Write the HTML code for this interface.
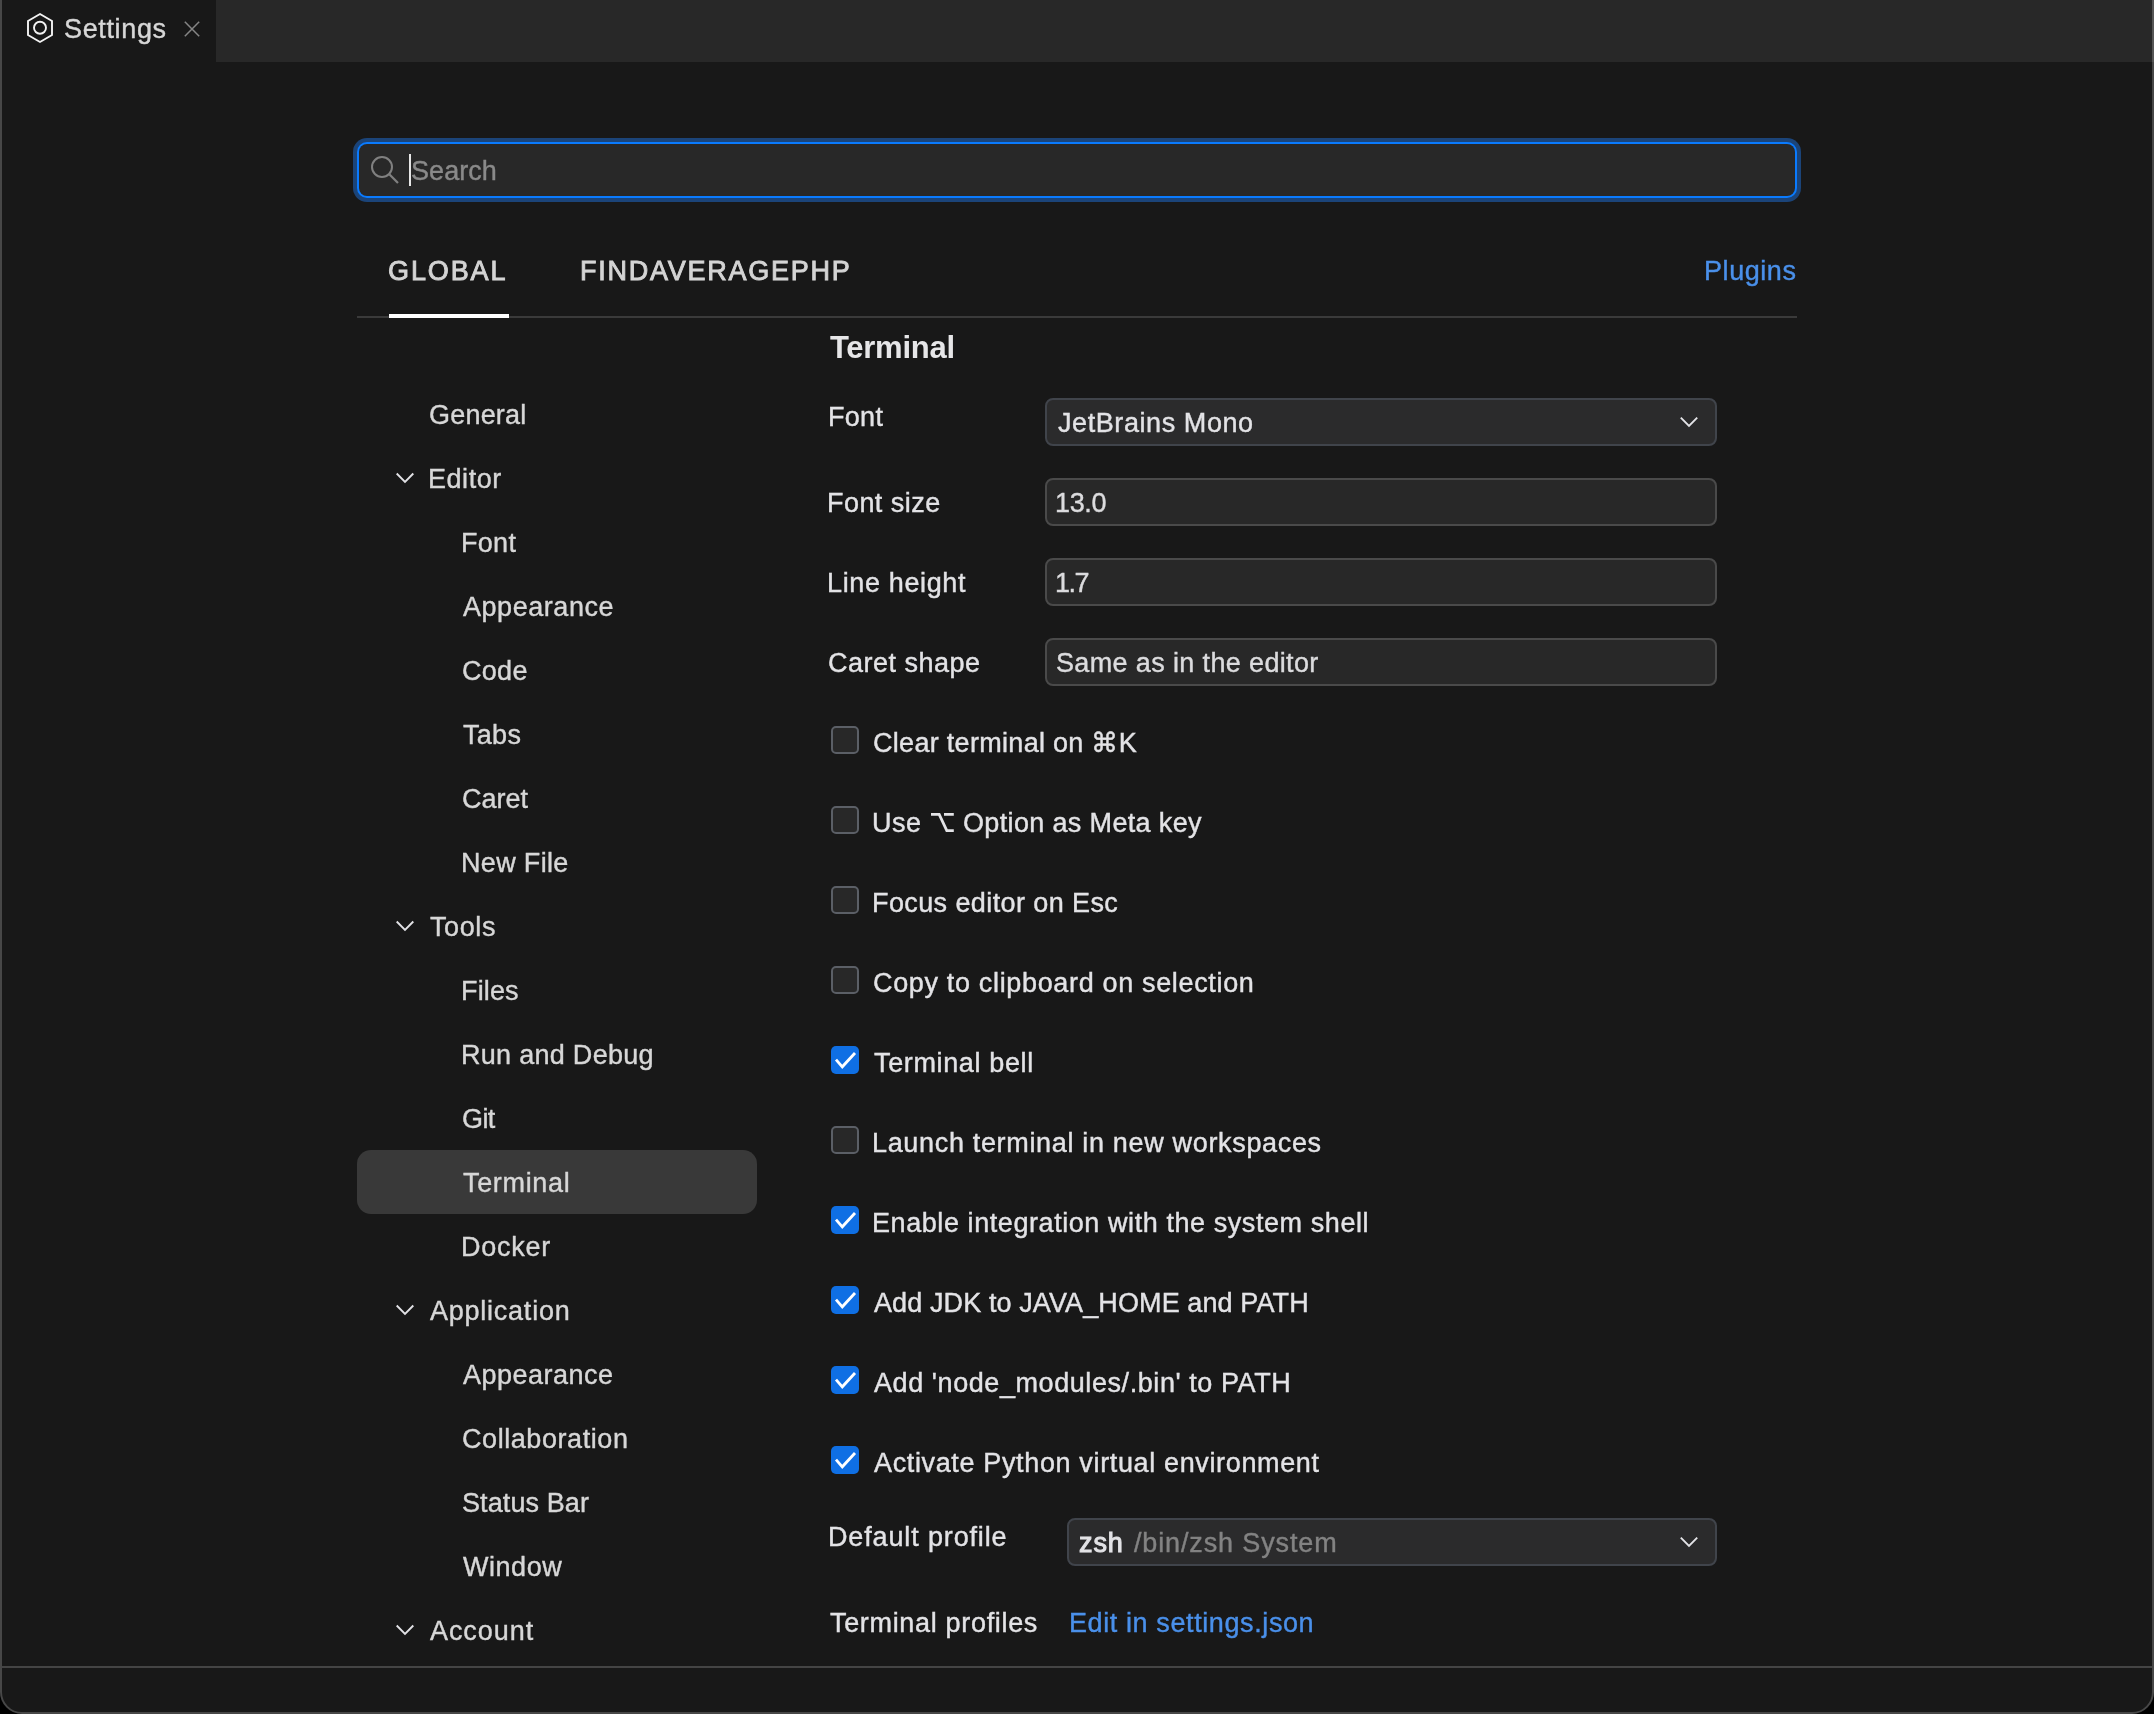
<!DOCTYPE html>
<html><head><meta charset="utf-8">
<style>
*{margin:0;padding:0;box-sizing:border-box}
html,body{width:2154px;height:1714px;overflow:hidden;background:#000}
body{font-family:"Liberation Sans",sans-serif;position:relative}
.win{position:absolute;left:0;top:-30px;width:2154px;height:1744px;background:#181818;border:2px solid #474747;border-radius:22px;overflow:hidden}
.t{position:absolute;line-height:1;white-space:nowrap;-webkit-font-smoothing:antialiased;will-change:transform;-webkit-text-stroke:0.4px currentColor}
.side{color:#d7d7d7}
.lab{color:#e3e3e6}
.val{color:#dcdcde}
.abs{position:absolute}
.box{position:absolute;border-radius:8px}
.field{background:#282828;border:2px solid #4a4a4a}
.dd{background:#2b2b2c;border:2px solid #40444b}
.cb{position:absolute;width:28px;height:28px;border-radius:5px;background:#282828;border:2px solid #5b5f66}
.cb.on{background:#0f6fe4;border:none}
</style></head><body>
<div class="win"></div>
<div class="abs" style="left:216px;top:0;width:1936px;height:62px;background:#282828"></div>
<div class="abs" style="left:2152px;top:0;width:2px;height:62px;background:#555555"></div>
<svg class="abs" style="left:24px;top:10px" width="32" height="36" viewBox="0 0 32 36">
<polygon points="16,4 28,11 28,25 16,32 4,25 4,11" fill="none" stroke="#f2f2f2" stroke-width="1.9"/>
<circle cx="16" cy="17.75" r="6" fill="none" stroke="#f2f2f2" stroke-width="1.9"/>
</svg>
<div id="t1" class="t side" style="left:64.00px;top:16.14px;font-size:27px;letter-spacing:0.643px;">Settings</div>
<svg class="abs" style="left:182px;top:19px" width="20" height="20" viewBox="0 0 20 20">
<path d="M2.8 2.8L17.2 17.2M17.2 2.8L2.8 17.2" stroke="#858585" stroke-width="1.5" fill="none"/>
</svg>
<div class="abs" style="left:353px;top:138px;width:1448px;height:64px;border-radius:14px;background:#1b4479"></div>
<div class="abs" style="left:357px;top:142px;width:1440px;height:56px;border-radius:10px;background:#0a7bff"></div>
<div class="abs" style="left:359px;top:144px;width:1436px;height:52px;border-radius:8px;background:#282828"></div>
<svg class="abs" style="left:360px;top:145px" width="50" height="50" viewBox="0 0 50 50">
<circle cx="22" cy="22" r="10" fill="none" stroke="#808080" stroke-width="2"/>
<path d="M29.3 29.3L38 38" stroke="#808080" stroke-width="2.2" fill="none"/>
</svg>
<div class="abs" style="left:409px;top:154px;width:2px;height:32px;background:#e6e6e6"></div>
<div id="t2" class="t " style="left:411.00px;top:158.14px;font-size:27px;letter-spacing:0.060px;color:#8a8a8a">Search</div>
<div id="t3" class="t " style="left:388.20px;top:258.14px;font-size:27px;letter-spacing:1.880px;color:#d4d4d4;-webkit-text-stroke:0.9px #d4d4d4">GLOBAL</div>
<div id="t4" class="t " style="left:579.80px;top:258.14px;font-size:27px;letter-spacing:1.746px;color:#d4d4d4;-webkit-text-stroke:0.9px #d4d4d4">FINDAVERAGEPHP</div>
<div id="t5" class="t " style="left:1704.20px;top:258.14px;font-size:27px;letter-spacing:0.567px;color:#4a90ea">Plugins</div>
<div class="abs" style="left:357px;top:316px;width:1440px;height:2px;background:#3a3a3a"></div>
<div class="abs" style="left:389px;top:314px;width:120px;height:4px;background:#ffffff"></div>
<div class="abs" style="left:357px;top:1150px;width:400px;height:64px;border-radius:14px;background:#393939"></div>
<div id="t6" class="t side" style="left:429.40px;top:402.34px;font-size:27px;letter-spacing:0.200px;">General</div>
<div id="t7" class="t side" style="left:428.40px;top:466.34px;font-size:27px;letter-spacing:0.540px;">Editor</div>
<svg class="abs" style="left:394px;top:469px" width="22" height="20" viewBox="0 0 22 20"><path d="M2.7 4.5L11 12.8L19.3 4.5" stroke="#e2e2e6" stroke-width="1.9" fill="none"/></svg>
<div id="t8" class="t side" style="left:460.60px;top:530.34px;font-size:27px;letter-spacing:0.300px;">Font</div>
<div id="t9" class="t side" style="left:462.60px;top:594.34px;font-size:27px;letter-spacing:0.545px;">Appearance</div>
<div id="t10" class="t side" style="left:461.60px;top:658.34px;font-size:27px;letter-spacing:0.300px;">Code</div>
<div id="t11" class="t side" style="left:462.60px;top:722.34px;font-size:27px;letter-spacing:0.300px;">Tabs</div>
<div id="t12" class="t side" style="left:461.60px;top:786.34px;font-size:27px;letter-spacing:0.000px;">Caret</div>
<div id="t13" class="t side" style="left:460.60px;top:850.34px;font-size:27px;letter-spacing:0.329px;">New File</div>
<div id="t14" class="t side" style="left:430.40px;top:914.34px;font-size:27px;letter-spacing:0.600px;">Tools</div>
<svg class="abs" style="left:394px;top:917px" width="22" height="20" viewBox="0 0 22 20"><path d="M2.7 4.5L11 12.8L19.3 4.5" stroke="#e2e2e6" stroke-width="1.9" fill="none"/></svg>
<div id="t15" class="t side" style="left:460.60px;top:978.34px;font-size:27px;letter-spacing:0.150px;">Files</div>
<div id="t16" class="t side" style="left:460.60px;top:1042.34px;font-size:27px;letter-spacing:0.284px;">Run and Debug</div>
<div id="t17" class="t side" style="left:461.60px;top:1106.34px;font-size:27px;letter-spacing:-0.600px;">Git</div>
<div id="t18" class="t side" style="left:462.60px;top:1170.34px;font-size:27px;letter-spacing:0.671px;">Terminal</div>
<div id="t19" class="t side" style="left:460.60px;top:1234.34px;font-size:27px;letter-spacing:0.740px;">Docker</div>
<div id="t20" class="t side" style="left:430.40px;top:1298.34px;font-size:27px;letter-spacing:0.760px;">Application</div>
<svg class="abs" style="left:394px;top:1301px" width="22" height="20" viewBox="0 0 22 20"><path d="M2.7 4.5L11 12.8L19.3 4.5" stroke="#e2e2e6" stroke-width="1.9" fill="none"/></svg>
<div id="t21" class="t side" style="left:462.60px;top:1362.34px;font-size:27px;letter-spacing:0.500px;">Appearance</div>
<div id="t22" class="t side" style="left:461.60px;top:1426.34px;font-size:27px;letter-spacing:0.567px;">Collaboration</div>
<div id="t23" class="t side" style="left:461.60px;top:1490.34px;font-size:27px;letter-spacing:0.100px;">Status Bar</div>
<div id="t24" class="t side" style="left:462.60px;top:1554.34px;font-size:27px;letter-spacing:0.540px;">Window</div>
<div id="t25" class="t side" style="left:430.40px;top:1618.34px;font-size:27px;letter-spacing:0.933px;">Account</div>
<svg class="abs" style="left:394px;top:1621px" width="22" height="20" viewBox="0 0 22 20"><path d="M2.7 4.5L11 12.8L19.3 4.5" stroke="#e2e2e6" stroke-width="1.9" fill="none"/></svg>
<div id="t26" class="t " style="left:830.40px;top:331.76px;font-size:31px;letter-spacing:-0.272px;font-weight:bold;color:#e6e6e8;-webkit-text-stroke:0">Terminal</div>
<div id="t27" class="t lab" style="left:828.40px;top:404.14px;font-size:27px;letter-spacing:0.300px;">Font</div>
<div class="box dd" style="left:1045px;top:398px;width:672px;height:48px"></div>
<div id="t28" class="t lab" style="left:1057.60px;top:410.14px;font-size:27px;letter-spacing:0.577px;">JetBrains Mono</div>
<svg class="abs" style="left:1676px;top:410px" width="26" height="24" viewBox="0 0 26 24"><path d="M4.8 7.7L13 15.9L21.2 7.7" stroke="#e4e4e8" stroke-width="1.9" fill="none"/></svg>
<div id="t29" class="t lab" style="left:827.40px;top:490.14px;font-size:27px;letter-spacing:0.450px;">Font size</div>
<div class="box field" style="left:1045px;top:478px;width:672px;height:48px"></div>
<div id="t30" class="t val" style="left:1055.00px;top:490.14px;font-size:27px;letter-spacing:-0.367px;">13.0</div>
<div id="t31" class="t lab" style="left:827.40px;top:570.14px;font-size:27px;letter-spacing:0.640px;">Line height</div>
<div class="box field" style="left:1045px;top:558px;width:672px;height:48px"></div>
<div id="t32" class="t val" style="left:1055.00px;top:570.14px;font-size:27px;letter-spacing:-1.500px;">1.7</div>
<div id="t33" class="t lab" style="left:828.40px;top:650.14px;font-size:27px;letter-spacing:0.500px;">Caret shape</div>
<div class="box field" style="left:1045px;top:638px;width:672px;height:48px"></div>
<div id="t34" class="t val" style="left:1056.00px;top:650.14px;font-size:27px;letter-spacing:0.360px;">Same as in the editor</div>
<div class="cb" style="left:831px;top:726px"></div>
<div id="t35" class="t lab" style="left:872.60px;top:730.14px;font-size:27px;letter-spacing:0.300px;">Clear terminal on ⌘K</div>
<div class="cb" style="left:831px;top:806px"></div>
<div id="t36" class="t lab" style="left:872.00px;top:810.14px;font-size:27px;letter-spacing:0.500px;">Use</div>
<svg class="abs" style="left:931px;top:813px" width="24" height="20" viewBox="0 0 24 20"><path d="M0 1.4H8.2L15.8 17.6H22.8M13 1.4H22.8" stroke="#e3e3e6" stroke-width="2.8" fill="none"/></svg>
<div id="t37" class="t lab" style="left:962.50px;top:810.14px;font-size:27px;letter-spacing:0.347px;">Option as Meta key</div>
<div class="cb" style="left:831px;top:886px"></div>
<div id="t38" class="t lab" style="left:871.60px;top:890.14px;font-size:27px;letter-spacing:0.400px;">Focus editor on Esc</div>
<div class="cb" style="left:831px;top:966px"></div>
<div id="t39" class="t lab" style="left:872.60px;top:970.14px;font-size:27px;letter-spacing:0.659px;">Copy to clipboard on selection</div>
<div class="cb on" style="left:831px;top:1046px"><svg width="28" height="28" viewBox="0 0 28 28" style="position:absolute;left:0;top:0"><path d="M5 13.6L11.3 20.8L24 7" stroke="#fff" stroke-width="2.8" fill="none"/></svg></div>
<div id="t40" class="t lab" style="left:873.60px;top:1050.14px;font-size:27px;letter-spacing:0.633px;">Terminal bell</div>
<div class="cb" style="left:831px;top:1126px"></div>
<div id="t41" class="t lab" style="left:871.60px;top:1130.14px;font-size:27px;letter-spacing:0.669px;">Launch terminal in new workspaces</div>
<div class="cb on" style="left:831px;top:1206px"><svg width="28" height="28" viewBox="0 0 28 28" style="position:absolute;left:0;top:0"><path d="M5 13.6L11.3 20.8L24 7" stroke="#fff" stroke-width="2.8" fill="none"/></svg></div>
<div id="t42" class="t lab" style="left:871.60px;top:1210.14px;font-size:27px;letter-spacing:0.572px;">Enable integration with the system shell</div>
<div class="cb on" style="left:831px;top:1286px"><svg width="28" height="28" viewBox="0 0 28 28" style="position:absolute;left:0;top:0"><path d="M5 13.6L11.3 20.8L24 7" stroke="#fff" stroke-width="2.8" fill="none"/></svg></div>
<div id="t43" class="t lab" style="left:873.60px;top:1290.14px;font-size:27px;letter-spacing:0.107px;">Add JDK to JAVA_HOME and PATH</div>
<div class="cb on" style="left:831px;top:1366px"><svg width="28" height="28" viewBox="0 0 28 28" style="position:absolute;left:0;top:0"><path d="M5 13.6L11.3 20.8L24 7" stroke="#fff" stroke-width="2.8" fill="none"/></svg></div>
<div id="t44" class="t lab" style="left:873.60px;top:1370.14px;font-size:27px;letter-spacing:0.574px;">Add &#x27;node_modules/.bin&#x27; to PATH</div>
<div class="cb on" style="left:831px;top:1446px"><svg width="28" height="28" viewBox="0 0 28 28" style="position:absolute;left:0;top:0"><path d="M5 13.6L11.3 20.8L24 7" stroke="#fff" stroke-width="2.8" fill="none"/></svg></div>
<div id="t45" class="t lab" style="left:873.60px;top:1450.14px;font-size:27px;letter-spacing:0.641px;">Activate Python virtual environment</div>
<div id="t46" class="t lab" style="left:828.00px;top:1524.14px;font-size:27px;letter-spacing:0.857px;">Default profile</div>
<div class="box dd" style="left:1067px;top:1518px;width:650px;height:48px"></div>
<div id="t47" class="t lab" style="left:1079.00px;top:1530.14px;font-size:27px;letter-spacing:0.900px;-webkit-text-stroke:1px #e3e3e6">zsh</div>
<div id="t48" class="t " style="left:1133.80px;top:1530.14px;font-size:27px;letter-spacing:0.864px;color:#838383">/bin/zsh System</div>
<svg class="abs" style="left:1676px;top:1530px" width="26" height="24" viewBox="0 0 26 24"><path d="M4.8 7.7L13 15.9L21.2 7.7" stroke="#e4e4e8" stroke-width="1.9" fill="none"/></svg>
<div id="t49" class="t lab" style="left:830.00px;top:1610.14px;font-size:27px;letter-spacing:0.675px;">Terminal profiles</div>
<div id="t50" class="t " style="left:1069.00px;top:1610.14px;font-size:27px;letter-spacing:0.600px;color:#4a90ea">Edit in settings.json</div>
<div class="abs" style="left:2px;top:1666px;width:2150px;height:2px;background:#444"></div>
</body></html>
